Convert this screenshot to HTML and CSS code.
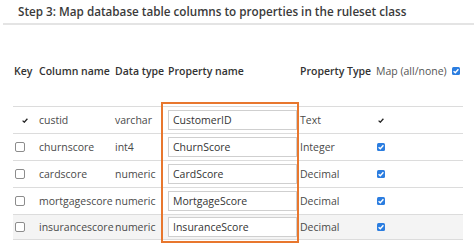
FILE: index.html
```html
<!DOCTYPE html>
<html>
<head>
<meta charset="utf-8">
<link rel="stylesheet" href="styles.css">
</head>
<body>
<div class="title">Step 3: Map database table columns to properties in the ruleset class</div>
<div class="table">
  <div class="row head">
    <div class="c key">Key</div>
    <div class="c">Column name</div>
    <div class="c">Data type</div>
    <div class="c">Property name</div>
    <div class="c">Property Type</div>
    <div class="c map"><span class="maplabel">Map (all/none)</span><span class="cb on"><svg viewBox="0 0 8 8" width="8" height="8"><path d="M1.6 4.2 L3.3 5.8 L6.4 2.3" fill="none" stroke="#fff" stroke-width="1.4"/></svg></span></div>
  </div>
  <div class="row">
    <div class="c key"><svg class="tick" viewBox="0 0 6 5" width="6" height="5"><path d="M0.6 2.6 L2.3 4.2 L5.4 0.8" fill="none" stroke="#222" stroke-width="1.3"/></svg></div>
    <div class="c">custid</div>
    <div class="c">varchar</div>
    <div class="c"><div class="inp">CustomerID</div></div>
    <div class="c">Text</div>
    <div class="c mapc"><svg class="tick2" viewBox="0 0 6 5" width="6" height="5"><path d="M0.6 2.6 L2.3 4.2 L5.4 0.8" fill="none" stroke="#222" stroke-width="1.3"/></svg></div>
  </div>
  <div class="row">
    <div class="c key"><span class="box"></span></div>
    <div class="c">churnscore</div>
    <div class="c">int4</div>
    <div class="c"><div class="inp">ChurnScore</div></div>
    <div class="c">Integer</div>
    <div class="c mapc"><span class="cb on"><svg viewBox="0 0 8 8" width="8" height="8"><path d="M1.6 4.2 L3.3 5.8 L6.4 2.3" fill="none" stroke="#fff" stroke-width="1.4"/></svg></span></div>
  </div>
  <div class="row">
    <div class="c key"><span class="box"></span></div>
    <div class="c">cardscore</div>
    <div class="c">numeric</div>
    <div class="c"><div class="inp">CardScore</div></div>
    <div class="c">Decimal</div>
    <div class="c mapc"><span class="cb on"><svg viewBox="0 0 8 8" width="8" height="8"><path d="M1.6 4.2 L3.3 5.8 L6.4 2.3" fill="none" stroke="#fff" stroke-width="1.4"/></svg></span></div>
  </div>
  <div class="row">
    <div class="c key"><span class="box"></span></div>
    <div class="c">mortgagescore</div>
    <div class="c">numeric</div>
    <div class="c"><div class="inp">MortgageScore</div></div>
    <div class="c">Decimal</div>
    <div class="c mapc"><span class="cb on"><svg viewBox="0 0 8 8" width="8" height="8"><path d="M1.6 4.2 L3.3 5.8 L6.4 2.3" fill="none" stroke="#fff" stroke-width="1.4"/></svg></span></div>
  </div>
  <div class="row last">
    <div class="c key"><span class="box"></span></div>
    <div class="c">insurancescore</div>
    <div class="c">numeric</div>
    <div class="c"><div class="inp">InsuranceScore</div></div>
    <div class="c">Decimal</div>
    <div class="c mapc"><span class="cb on"><svg viewBox="0 0 8 8" width="8" height="8"><path d="M1.6 4.2 L3.3 5.8 L6.4 2.3" fill="none" stroke="#fff" stroke-width="1.4"/></svg></span></div>
  </div>
  <div class="highlight"></div>
</div>
</body>
</html>
```
FILE: styles.css
```css
html, body {
  margin: 0;
  padding: 0;
  background: #fff;
}
body {
  font-family: "Open Sans", "Noto Sans", sans-serif;
  color: #4a4a4a;
  width: 474px;
  height: 251px;
  overflow: hidden;
}
.title {
  font-size: 11.7px;
  font-weight: 600;
  color: #3a3a3a;
  line-height: 16px;
  padding: 3px 0 4px 15px;
  margin-left: 3px;
  border-bottom: 2px solid #e4e4e4;
  white-space: nowrap;
}
.table {
  position: relative;
  margin-left: 13px;
  width: 450px;
  font-size: 10.5px;
}
.row {
  display: grid;
  grid-template-columns: 26px 76px 53px 132px 76px 87px;
  align-items: center;
  height: 26px;
  border-top: 1px solid #dcdcdc;
  white-space: nowrap;
}
.row.head {
  border-top: 0;
  height: 16px;
  padding: 38px 0 27px;
  font-weight: 600;
  font-size: 10.5px;
  color: #333;
  line-height: 16px;
}
.row.last {
  height: 24px;
  background: #f4f4f4;
  border-bottom: 1px solid #dcdcdc;
}
.c {
  display: flex;
  align-items: center;
}
.key {
  padding-left: 1px;
}
.map {
  font-weight: 400;
  font-size: 10.5px;
  color: #555;
}
.maplabel {
  margin-right: 5px;
}
.cb {
  display: inline-flex;
  width: 8px;
  height: 8px;
  border-radius: 1.5px;
}
.cb.on {
  background: #2b7de0;
}
.mapc .cb {
  margin-left: 1px;
}
.tick {
  margin-left: 8px;
}
.tick2 {
  margin-left: 2px;
}
.box {
  display: inline-block;
  width: 8px;
  height: 8px;
  border: 1px solid #8c8c8c;
  border-radius: 2px;
  margin-left: 1px;
  background: #fff;
}
.inp {
  width: 129px;
  height: 20px;
  box-sizing: border-box;
  border: 1px solid #cfcfcf;
  background: #fff;
  padding-left: 4px;
  line-height: 18px;
  color: #333;
  font-size: 10.5px;
}
.highlight {
  position: absolute;
  left: 148px;
  top: 77px;
  width: 138px;
  height: 141px;
  box-sizing: border-box;
  border: 2px solid #e8772e;
}
```
